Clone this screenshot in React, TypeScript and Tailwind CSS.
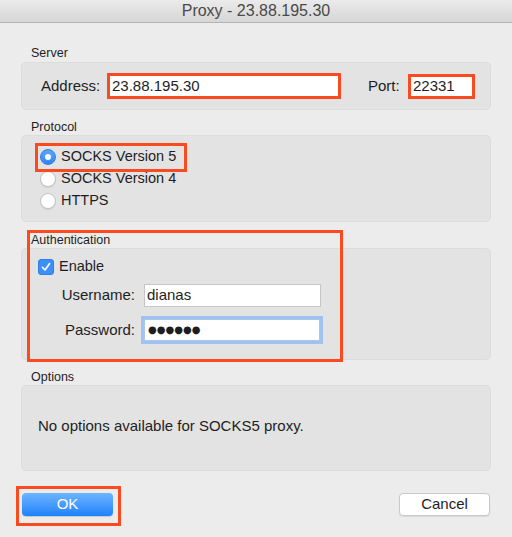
import React from "react";

function Radio({ checked }: { checked?: boolean }) {
  if (checked) {
    return (
      <span className="w-[16px] h-[16px] rounded-full bg-gradient-to-b from-[#5aa8fb] to-[#2f87f6] border border-[#2f7fe6] flex items-center justify-center shrink-0">
        <span className="w-[6px] h-[6px] rounded-full bg-white" />
      </span>
    );
  }
  return (
    <span className="w-[16px] h-[16px] rounded-full bg-white border border-[#c2c2c2] shadow-[0_1px_1px_rgba(0,0,0,0.08)] shrink-0" />
  );
}

export default function App() {
  return (
    <div
      className="w-[512px] h-[537px] bg-[#ececec] relative overflow-hidden text-[#1e1e1e]"
      style={{ fontFamily: '"Liberation Sans", Arial, sans-serif' }}
    >
      {/* Title bar */}
      <div className="h-[23px] bg-gradient-to-b from-[#ebebeb] to-[#d6d6d6] border-b border-[#b4b4b4] flex items-center justify-center text-[16px] text-[#4a4a4a] leading-none">
        Proxy - 23.88.195.30
      </div>

      <div className="px-[21px]">
        {/* Server */}
        <div className="mt-[22px] pl-[10px] text-[12.5px] leading-[16px]">Server</div>
        <div className="mt-[1px] h-[48px] rounded-[5px] bg-[#e3e3e3] border border-[#dcdcdc] flex items-center text-[15px]">
          <div className="ml-[19px] w-[66px]">Address:</div>
          <div className="w-[234px] h-[26px] bg-white border-[3px] border-[#fa4a1f] flex items-center pl-[2px] text-[15px]">
            23.88.195.30
          </div>
          <div className="ml-[27px] w-[40px]">Port:</div>
          <div className="w-[67px] h-[25px] bg-white border-[3px] border-[#fa4a1f] flex items-center pl-[2px] text-[15px]">
            22331
          </div>
        </div>

        {/* Protocol */}
        <div className="mt-[9px] pl-[10px] text-[12.5px] leading-[16px]">Protocol</div>
        <div className="relative h-[87px] rounded-[5px] bg-[#e3e3e3] border border-[#dcdcdc] pt-[10px] text-[14.5px]">
          <div className="h-[22px] flex items-center pl-[18px] gap-[5px]">
            <Radio checked />
            <span>SOCKS Version 5</span>
          </div>
          <div className="h-[22px] flex items-center pl-[18px] gap-[5px]">
            <Radio />
            <span>SOCKS Version 4</span>
          </div>
          <div className="h-[22px] flex items-center pl-[18px] gap-[5px]">
            <Radio />
            <span>HTTPS</span>
          </div>
          <div className="absolute left-[13px] top-[7px] w-[152px] h-[29px] border-[3px] border-[#fa4a1f]" />
        </div>

        {/* Authentication */}
        <div className="mt-[10px] pl-[10px] text-[12.5px] leading-[16px]">Authentication</div>
        <div className="h-[112px] rounded-[5px] bg-[#e3e3e3] border border-[#dcdcdc] pt-[7px] text-[15px]">
          <div className="h-[22px] flex items-center pl-[16px] gap-[5px]">
            <span className="w-[16px] h-[16px] rounded-[3px] bg-[#3b8ff7] border border-[#2f7fe6] flex items-center justify-center">
              <svg width="12" height="12" viewBox="0 0 12 12" fill="none">
                <path d="M2.5 6.4 L5 9 L9.6 2.6" stroke="white" strokeWidth="1.7" strokeLinecap="round" strokeLinejoin="round" />
              </svg>
            </span>
            <span className="text-[14.5px]">Enable</span>
          </div>
          <div className="mt-[6px] flex items-center">
            <div className="w-[113px] text-right">Username:</div>
            <div className="ml-[9px] w-[177px] h-[23px] bg-white border border-[#c6c6c6] flex items-center pl-[2px] text-[15px]">
              dianas
            </div>
          </div>
          <div className="mt-[12px] flex items-center">
            <div className="w-[113px] text-right">Password:</div>
            <div className="ml-[9px] w-[176px] h-[22px] bg-white border border-[#a9c7ee] ring-[3px] ring-[#9ec3f0] flex items-center pl-[3px]">
              <span className="text-[10px] leading-none" style={{ fontFamily: '"DejaVu Sans", sans-serif' }}>
                ●●●●●●
              </span>
            </div>
          </div>
        </div>

        {/* Options */}
        <div className="mt-[9px] pl-[10px] text-[12.5px] leading-[16px]">Options</div>
        <div className="h-[86px] rounded-[5px] bg-[#e3e3e3] border border-[#dcdcdc] flex items-center pl-[16px] pb-[4px] text-[15px]">
          No options available for SOCKS5 proxy.
        </div>

        {/* Buttons */}
        <div className="mt-[22px] flex justify-between px-[1px]">
          <button className="w-[91px] h-[23px] rounded-[4px] bg-gradient-to-b from-[#6cb4ff] to-[#1a82fb] text-white text-[15px] flex items-center justify-center shadow-[0_1px_1px_rgba(0,0,0,0.15)]">
            OK
          </button>
          <button className="w-[91px] h-[23px] rounded-[4px] bg-white border border-[#c8c8c8] text-[15px] text-[#1e1e1e] flex items-center justify-center shadow-[0_1px_1px_rgba(0,0,0,0.08)]">
            Cancel
          </button>
        </div>
      </div>

      {/* Annotation overlays */}
      <div className="absolute left-[27px] top-[230px] w-[316px] h-[132px] border-[3px] border-[#fa4a1f] pointer-events-none" />
      <div className="absolute left-[16px] top-[486px] w-[105px] h-[40px] border-[3px] border-[#fa4a1f] pointer-events-none" />
    </div>
  );
}
